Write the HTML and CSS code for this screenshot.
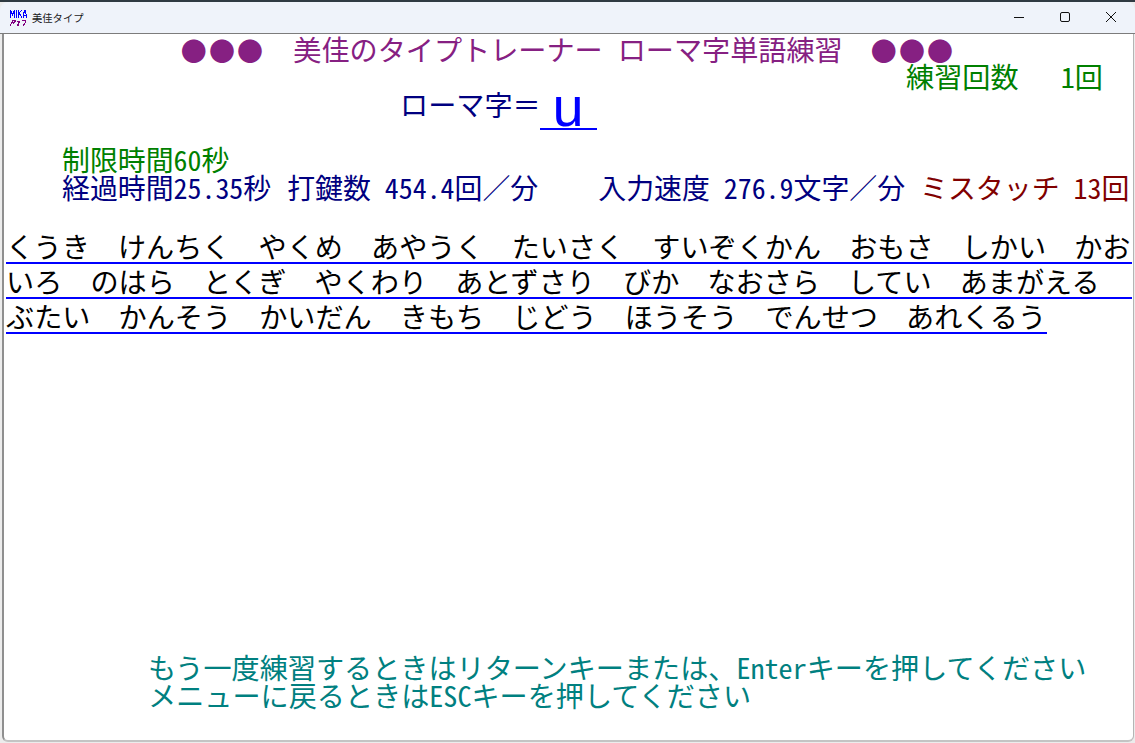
FILE: index.html
```html
<!DOCTYPE html>
<html lang="ja">
<head>
    <meta charset="UTF-8">
    <title>美佳タイプ</title>
    <link rel="stylesheet" href="styles.css">
</head>
<body>
    <div class="window">
        <div class="titlebar">
            <svg class="app-icon" width="18" height="18" viewBox="0 0 18 18" shape-rendering="crispEdges">
                <path d="M1.500 9V1M1.500 1.500l2 4 2-4M5.500 9V1M7.500 1v8M9.500 1v8M9.500 5l3.500-4M10.500 4.500l2.500 4.500M14 9l1.500-8h1l1 8M14.500 6h2.500" stroke="#0000ff" fill="none"/>
                <path d="M1 17l3-6h2.500l-1 3M2.500 13l3 1.500M7.500 12h3.500l-3 5M9.500 14v3M12.500 11h4.500l-1 3-2 3" stroke="#800080" fill="none"/>
            </svg>
            <span class="app-name">美佳タイプ</span>
            <div class="controls">
                <svg width="46" height="32" viewBox="0 0 46 32"><path d="M18 16.500h10" stroke="#111"/></svg>
                <svg width="46" height="32" viewBox="0 0 46 32"><rect x="18.500" y="11.500" width="9" height="9" rx="1.500" fill="none" stroke="#111"/></svg>
                <svg width="46" height="32" viewBox="0 0 46 32"><path d="M18 11l10 10M28 11l-10 10" stroke="#111"/></svg>
            </div>
        </div>
        <div class="content">
            <div class="heading"><span class="dots">●●●</span>　美佳のタイプトレーナー<span class="num title-gap">&nbsp;</span>ローマ字単語練習　<span class="dots">●●●</span></div>
            <div class="count">練習回数<span class="num">&nbsp;&nbsp;&nbsp;1</span>回</div>
            <div class="romaji">
                <span class="romaji-label">ローマ字＝</span>
                <span class="romaji-key">u</span>
            </div>
            <div class="stats">
                <div class="limit">制限時間<span class="num">60</span>秒</div>
                <div class="speed">
                    <span>経過時間<span class="num">25.35</span>秒<span class="num stat-gap">&nbsp;</span>打鍵数<span class="num">&nbsp;454.4</span>回／分</span>
                    <span class="speed-input">入力速度<span class="num">&nbsp;276.9</span>文字／分</span>
                    <span class="miss">ミスタッチ<span class="num">&nbsp;13</span>回</span>
                </div>
            </div>
            <div class="words">
                <div class="word-row full">くうき　けんちく　やくめ　あやうく　たいさく　すいぞくかん　おもさ　しかい　かお</div>
                <div class="word-row full">いろ　のはら　とくぎ　やくわり　あとずさり　びか　なおさら　してい　あまがえる</div>
                <div class="word-row">ぶたい　かんそう　かいだん　きもち　じどう　ほうそう　でんせつ　あれくるう</div>
            </div>
            <div class="help">
                <div>もう一度練習するときはリターンキーまたは、<span class="num">Enter</span>キーを押してください</div>
                <div>メニューに戻るときは<span class="num">ESC</span>キーを押してください</div>
            </div>
        </div>
    </div>
</body>
</html>
```
FILE: styles.css
```css
html, body {
    margin: 0;
    height: 100%;
    overflow: hidden;
    background-color: #ececec;
}
.window {
    height: 742px;
    box-sizing: border-box;
    border-top: 2px solid #2f3a42;
    display: flex;
    flex-direction: column;
    font-family: "Noto Sans CJK JP", sans-serif;
}
.titlebar {
    height: 31px;
    flex: none;
    display: flex;
    align-items: center;
    padding-left: 9px;
    background-color: #eff3fa;
    border-radius: 8px 8px 0 0;
    border-bottom: 1px solid #7c7c7c;
}
.app-icon {
    margin-right: 5px;
}
.app-name {
    font-size: 10.300px;
    color: #1a1a1a;
}
.controls {
    margin-left: auto;
    margin-right: 1px;
    margin-bottom: 2px;
    display: flex;
}
.content {
    flex: 1;
    background-color: white;
    margin: 0 1px 0 2px;
    border-left: 2px solid #8f8f8f;
    border-right: 1px solid #b5b5b5;
    border-bottom: 2px solid #c4c4c4;
    border-radius: 0 0 6px 6px;
    padding-left: 2px;
    font-size: 28.130px;
    line-height: 28px;
    white-space: nowrap;
}
.num {
    font-feature-settings: "hwid";
}
.heading {
    margin-top: 1px;
    text-align: center;
    color: #862082;
    padding-right: 3px;
}
.dots {
    font-size: 26px;
    letter-spacing: 2.100px;
}
.title-gap {
    margin-right: 1px;
}
.count {
    margin-top: -2px;
    margin-left: 900px;
    color: #008000;
}
.romaji {
    display: flex;
    align-items: flex-end;
    margin-left: 394px;
    height: 40px;
    color: #000080;
}
.romaji-label {
    margin-bottom: 12px;
}
.romaji-key {
    width: 57px;
    margin-left: -1px;
    text-align: center;
    font-family: "Liberation Sans", sans-serif;
    font-size: 56px;
    line-height: 26px;
    padding-bottom: 8px;
    color: #0000ff;
    border-bottom: 2px solid #0000ff;
}
.stats {
    margin-top: 15px;
    margin-left: 56px;
    font-size: 27.900px;
}
.limit {
    color: #008000;
}
.speed {
    color: #000080;
    display: flex;
}
.stat-gap {
    margin-right: 2px;
}
.speed-input {
    margin-left: 60px;
}
.miss {
    margin-left: 15px;
    color: #800000;
}
.words {
    margin-top: 28px;
    color: black;
}
.word-row {
    width: fit-content;
    height: 30px;
    padding-top: 3px;
    padding-right: 1px;
    border-bottom: 2px solid #0000ff;
}
.word-row.full {
    width: 1126px;
    padding-right: 0;
}
.help {
    margin-top: 319px;
    margin-left: 142px;
    color: #008080;
}
```
